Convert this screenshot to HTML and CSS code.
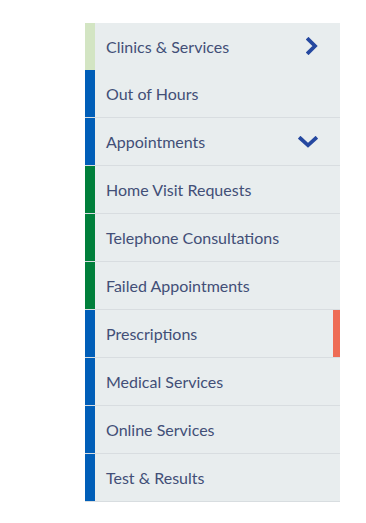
FILE: index.html
```html
<!DOCTYPE html>
<html lang="en">
<head>
<meta charset="utf-8">
<title>Menu</title>
<link rel="stylesheet" href="styles.css">
</head>
<body>
<nav class="side-nav">
  <ul class="menu">
    <li class="menu-item bar-light"><a class="menu-link" href="#"><span class="label">Clinics &amp; Services</span>
      <svg class="chev chev-right" width="12" height="18" viewBox="0 0 12 18"><path d="M2.5 2.5 L9 9 L2.5 15.5" fill="none" stroke="#2548a0" stroke-width="3.8" stroke-linecap="square"/></svg></a></li>
    <li class="menu-item bar-blue"><a class="menu-link" href="#"><span class="label">Out of Hours</span></a></li>
    <li class="menu-item bar-blue"><a class="menu-link" href="#"><span class="label">Appointments</span>
      <svg class="chev chev-down" width="20" height="12" viewBox="0 0 20 12"><path d="M2.5 2.5 L10 9.3 L17.5 2.5" fill="none" stroke="#2548a0" stroke-width="3.8" stroke-linecap="square"/></svg></a></li>
    <li class="menu-item bar-green"><a class="menu-link" href="#"><span class="label">Home Visit Requests</span></a></li>
    <li class="menu-item bar-green"><a class="menu-link" href="#"><span class="label">Telephone Consultations</span></a></li>
    <li class="menu-item bar-green"><a class="menu-link" href="#"><span class="label">Failed Appointments</span></a></li>
    <li class="menu-item bar-blue is-active"><a class="menu-link" href="#"><span class="label">Prescriptions</span></a></li>
    <li class="menu-item bar-blue"><a class="menu-link" href="#"><span class="label">Medical Services</span></a></li>
    <li class="menu-item bar-blue"><a class="menu-link" href="#"><span class="label">Online Services</span></a></li>
    <li class="menu-item bar-blue"><a class="menu-link" href="#"><span class="label">Test &amp; Results</span></a></li>
  </ul>
</nav>
</body>
</html>
```
FILE: styles.css
```css
html, body {
  margin: 0;
  padding: 0;
  background: #ffffff;
}

body {
  font-family: "Lato", "Open Sans", sans-serif;
}

.side-nav {
  padding: 23px 0 0 85px;
}

.menu {
  list-style: none;
  margin: 0;
  padding: 0;
  width: 255px;
}

.menu-item {
  border-bottom: 1px solid #d8dde0;
}

.menu-item:first-child {
  border-bottom: none;
}

.menu-link {
  display: flex;
  align-items: center;
  height: 47px;
  box-sizing: border-box;
  padding: 0 22px 0 11px;
  border-left: 10px solid #005eb8;
  background: #e8edee;
  color: #424f77;
  font-size: 16px;
  text-decoration: none;
}

.bar-light .menu-link { border-left-color: #d3e5c3; }
.bar-blue .menu-link { border-left-color: #005eb8; }
.bar-green .menu-link { border-left-color: #007f3b; }

.is-active .menu-link {
  box-shadow: inset -7px 0 0 #ee6c55;
}

.label {
  flex: 1;
}

.chev {
  display: block;
  flex: none;
}

.chev-right {
  margin-top: -2px;
}
```
